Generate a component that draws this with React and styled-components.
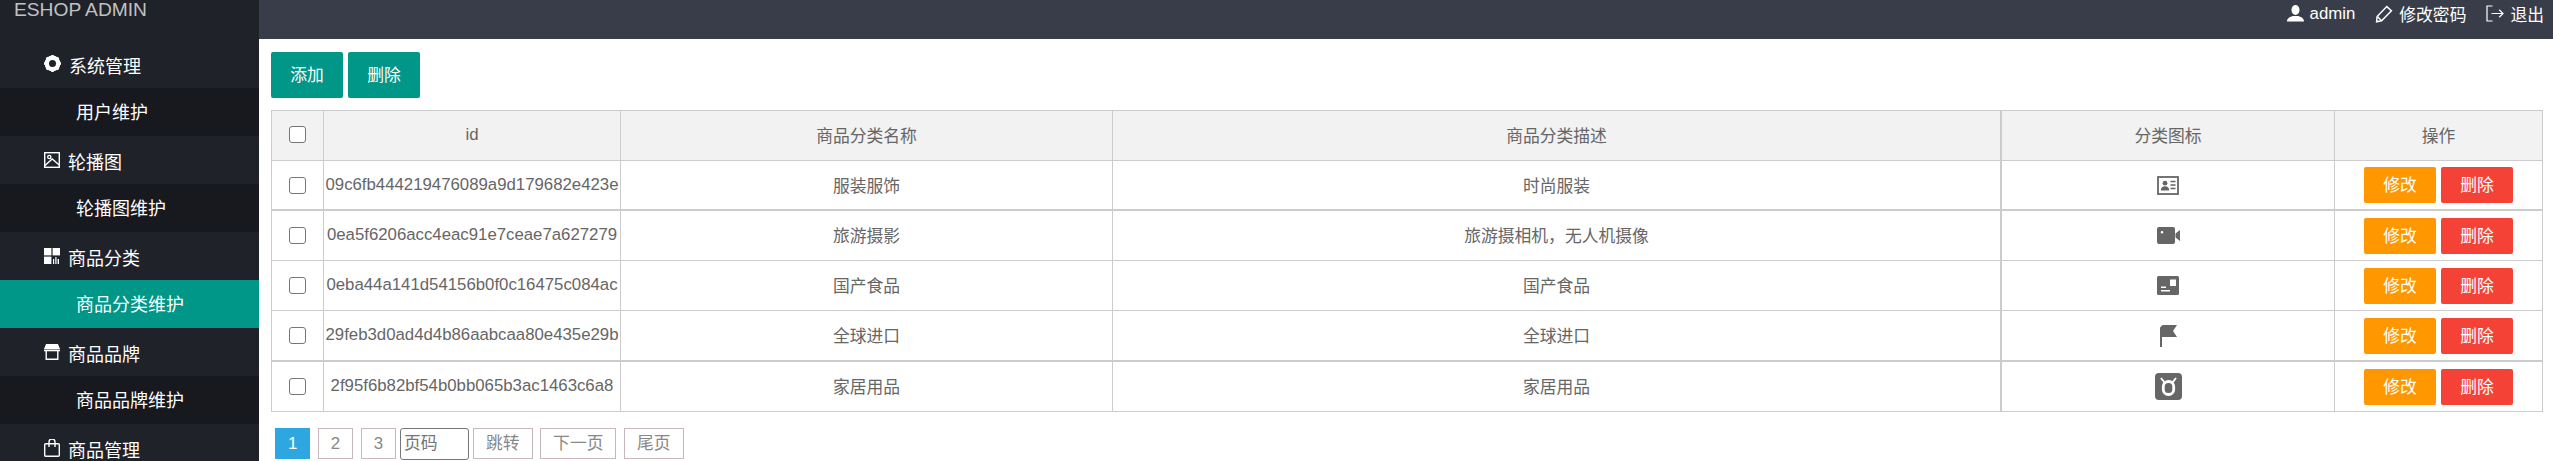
import React from 'react';
import styled, { createGlobalStyle } from 'styled-components';

const GlobalStyle = createGlobalStyle`
    * {
        box-sizing: border-box;
    }

    html, body {
        margin: 0;
        padding: 0;
        height: 100%;
        overflow: hidden;
        background: #fff;
    }

    body {
        font-family: "Liberation Sans", "Noto Sans CJK SC", sans-serif;
        font-size: 16.8px;
        color: #666;
    }
`;

const Page = styled.div`
    display: flex;
    height: 461px;
    overflow: hidden;
`;

const Sidebar = styled.aside`
    flex: 0 0 259px;
    background: #20222a;
    overflow: hidden;
`;

const Brand = styled.div`
    height: 39px;
    padding-left: 14px;
    font-size: 19.2px;
    line-height: 20px;
    color: #c2c2c2;
    white-space: nowrap;
`;

const MenuGroup = styled.div`
    display: flex;
    align-items: center;
    gap: 8px;
    height: ${(props) => (props.$first ? '49px' : '48px')};
    padding-top: 2px;
    padding-left: 44px;
    font-size: 18px;
    color: #fff;
    background: #20222a;

    svg {
        flex: none;
        margin-top: -2px;
    }
`;

const MenuItem = styled.div`
    display: flex;
    align-items: center;
    height: 48px;
    padding: 0 0 2px 76px;
    font-size: 18px;
    color: #fff;
    background: ${(props) => (props.$active ? '#009688' : '#18191f')};
`;

const Main = styled.main`
    flex: 1;
    min-width: 0;
    display: flex;
    flex-direction: column;
`;

const TopBar = styled.header`
    flex: 0 0 39px;
    display: flex;
    justify-content: flex-end;
    gap: 20px;
    padding-right: 9px;
    background: #393d49;
    color: #fff;
`;

const TopLink = styled.div`
    display: flex;
    align-items: center;
    gap: 6px;
    height: 27px;
    white-space: nowrap;
`;

const Content = styled.div`
    padding: 13px 11px 0 12px;
`;

const Toolbar = styled.div`
    display: flex;
    gap: 5px;
    margin-bottom: 12px;
`;

const Button = styled.button`
    width: 72px;
    height: ${(props) => (props.$large ? '46px' : '36px')};
    padding: 0 0 2px;
    border: none;
    border-radius: 2px;
    background: ${(props) => props.$color};
    color: #fff;
    font-family: inherit;
    font-size: 16.8px;
`;

const Table = styled.table`
    width: 2271px;
    table-layout: fixed;
    border-collapse: separate;
    border-spacing: 0;
    border-top: 1px solid #ccc;
    border-right: 1px solid #ccc;
`;

const HeadCell = styled.th`
    height: 50px;
    padding: 0 0 2px;
    font-weight: 400;
    background: #f2f2f2;
    border-left: ${(props) => (props.$thick ? '2px' : '1px')} solid #ccc;
    border-bottom: 1px solid #ccc;
`;

const Cell = styled.td`
    height: ${(props) => props.$height}px;
    padding: 0 0 ${(props) => (props.$flush ? '0' : '1px')};
    text-align: center;
    white-space: nowrap;
    border-left: ${(props) => (props.$thick ? '2px' : '1px')} solid #ccc;
    border-bottom: ${(props) => (props.$heavy ? '2px' : '1px')} solid #ccc;
`;

const CellInner = styled.div`
    display: flex;
    align-items: center;
    justify-content: center;
    gap: 5px;
`;

const Check = styled.input.attrs({ type: 'checkbox' })`
    appearance: none;
    display: block;
    width: 17px;
    height: 17px;
    margin: 0 auto;
    background: #fff;
    border: 1.5px solid #767676;
    border-radius: 3px;
`;

const Pager = styled.nav`
    display: flex;
    align-items: flex-start;
    gap: 7.5px;
    margin-top: 16px;
    padding-left: 4px;
`;

const PageLink = styled.a`
    height: 31px;
    padding: 0 12px;
    line-height: 29px;
    color: ${(props) => (props.$current ? '#fff' : '#888')};
    background: ${(props) => (props.$current ? '#2ea7e0' : '#fff')};
    border: 1px solid ${(props) => (props.$current ? '#2ea7e0' : '#c8b8bc')};
    white-space: nowrap;
`;

const PageInput = styled.input`
    width: 69px;
    height: 32px;
    margin: 0 -3.5px;
    padding: 0 3px;
    border: 1.5px solid #767676;
    border-radius: 3px;
    font-family: inherit;
    font-size: 16.8px;

    &::placeholder {
        color: #757575;
    }
`;

const GearIcon = () => (
    <svg width="17" height="17" viewBox="0 0 17 17">
        <circle cx="8.5" cy="8.5" r="5.7" fill="none" stroke="#fff" strokeWidth="4.4" />
        <g stroke="#fff" strokeWidth="2.4">
            <path d="M8.5 0v3M8.5 14v3M0 8.5h3M14 8.5h3M2.5 2.5l2 2M12.5 12.5l2 2M14.5 2.5l-2 2M4.5 12.5l-2 2" />
        </g>
    </svg>
);

const ImageIcon = () => (
    <svg width="16" height="16" viewBox="0 0 16 16" fill="none" stroke="#fff" strokeWidth="1.4">
        <rect x="0.7" y="0.7" width="14.6" height="14.6" />
        <circle cx="5.3" cy="5" r="1.6" />
        <path d="M1 13.6l7.2-6.6 7 6" />
    </svg>
);

const CategoryIcon = () => (
    <svg width="16" height="17" viewBox="0 0 16 17" fill="#fff">
        <rect x="0" y="0" width="7.4" height="7.4" />
        <rect x="8.6" y="0" width="7.4" height="7.4" />
        <rect x="0" y="8.6" width="7.4" height="7.4" />
        <path d="M9 11h1.2v5H9zM11.3 9h1.2v7h-1.2zM13.6 11H15v5h-1.4z" />
    </svg>
);

const StoreIcon = () => (
    <svg width="16" height="16" viewBox="0 0 16 16" fill="#fff">
        <path d="M2 0h12l2 5H0z" />
        <path d="M0 5.500h16v1.800H0z" />
        <path d="M1.500 7h1.400v7.400h10.200V7h1.400v9H1.500z" />
    </svg>
);

const BagIcon = () => (
    <svg width="16" height="18" viewBox="0 0 16 18" fill="none" stroke="#fff" strokeWidth="1.4">
        <rect x="0.7" y="4.700" width="14.6" height="12.6" rx="1" />
        <path d="M5 8V3a3 3 0 0 1 6 0v5" />
    </svg>
);

const UserIcon = () => (
    <svg width="17" height="17" viewBox="0 0 17 17" fill="#fff">
        <ellipse cx="8.5" cy="5" rx="4" ry="5" />
        <path d="M0 16.500c0-3.600 3.200-4.600 5.600-5.600h5.800c2.400 1 5.600 2 5.600 5.600z" />
    </svg>
);

const PencilIcon = () => (
    <svg width="18" height="18" viewBox="0 0 18 18" fill="none" stroke="#fff" strokeWidth="1.5">
        <path d="M11.800 1.600l4.600 4.200-9.800 10-5 1 .5-5.200z" />
        <path d="M2.600 11.800l4 4" />
    </svg>
);

const LogoutIcon = () => (
    <svg width="18" height="18" viewBox="0 0 18 18" fill="none" stroke="#fff" strokeWidth="1.2">
        <path d="M6.500 1H1v15h5.500" />
        <path d="M5.500 8.500H17M13.200 4.800l3.800 3.700-3.800 3.700" />
    </svg>
);

const CardIcon = () => (
    <svg width="22" height="19" viewBox="0 0 22 19">
        <rect x="1" y="1" width="20" height="17" fill="none" stroke="#666" strokeWidth="1.8" />
        <circle cx="8" cy="7.200" r="2.400" fill="#666" />
        <path d="M3.800 14.500c0-3 2-4.200 4.200-4.200s4.200 1.200 4.200 4.200z" fill="#666" />
        <path d="M13.500 5.500h5M13.500 9h5M13.500 12.500h5" stroke="#666" strokeWidth="1.5" />
    </svg>
);

const VideoIcon = () => (
    <svg width="23" height="17" viewBox="0 0 23 17" fill="#666">
        <path fillRule="evenodd" d="M2 0h14a2 2 0 0 1 2 2v13a2 2 0 0 1-2 2H2a2 2 0 0 1-2-2V2a2 2 0 0 1 2-2zM5 4a1.300 1.300 0 1 0 0 2.600A1.300 1.300 0 0 0 5 4z" />
        <path d="M18.500 6.500L23 3v11l-4.500-3.500z" />
    </svg>
);

const PostcardIcon = () => (
    <svg width="22" height="19" viewBox="0 0 22 19" fill="#666">
        <path fillRule="evenodd" d="M1.500 0h19A1.500 1.500 0 0 1 22 1.500v16a1.500 1.500 0 0 1-1.500 1.500h-19A1.500 1.500 0 0 1 0 17.500v-16A1.500 1.500 0 0 1 1.500 0zM13 3.500V10h6V3.500zM4 10.500V12h5v-1.500zM4 14v1.500h9V14z" />
    </svg>
);

const FlagIcon = () => (
    <svg width="17" height="22" viewBox="0 0 17 22" fill="#666">
        <path d="M0 2.500L2.500 0H17l-4 6 4 6H2v10H0z" />
    </svg>
);

const BullIcon = () => (
    <svg width="27" height="27" viewBox="0 0 27 27">
        <rect width="27" height="27" rx="4" fill="#666" />
        <rect x="8.300" y="8.500" width="10.400" height="13" rx="5" fill="none" stroke="#fff" strokeWidth="2.800" />
        <path d="M6 5l3.500 4.500M21 5l-3.500 4.500" stroke="#fff" strokeWidth="2" fill="none" />
    </svg>
);

const menu = [
    { icon: <GearIcon />, title: '系统管理', child: '用户维护', first: true },
    { icon: <ImageIcon />, title: '轮播图', child: '轮播图维护' },
    { icon: <CategoryIcon />, title: '商品分类', child: '商品分类维护', active: true },
    { icon: <StoreIcon />, title: '商品品牌', child: '商品品牌维护' },
    { icon: <BagIcon />, title: '商品管理' }
];

const rows = [
    { id: '09c6fb444219476089a9d179682e423e', name: '服装服饰', desc: '时尚服装', icon: <CardIcon />, height: 50, heavy: true },
    { id: '0ea5f6206acc4eac91e7ceae7a627279', name: '旅游摄影', desc: '旅游摄相机，无人机摄像', icon: <VideoIcon />, height: 50 },
    { id: '0eba44a141d54156b0f0c16475c084ac', name: '国产食品', desc: '国产食品', icon: <PostcardIcon />, height: 50 },
    { id: '29feb3d0ad4d4b86aabcaa80e435e29b', name: '全球进口', desc: '全球进口', icon: <FlagIcon />, height: 51, heavy: true },
    { id: '2f95f6b82bf54b0bb065b3ac1463c6a8', name: '家居用品', desc: '家居用品', icon: <BullIcon />, height: 50 }
];

function App() {
    return (
        <Page>
            <GlobalStyle />
            <Sidebar>
                <Brand>ESHOP ADMIN</Brand>
                {menu.map((group) => (
                    <React.Fragment key={group.title}>
                        <MenuGroup $first={group.first}>
                            {group.icon}
                            <span>{group.title}</span>
                        </MenuGroup>
                        {group.child && <MenuItem $active={group.active}>{group.child}</MenuItem>}
                    </React.Fragment>
                ))}
            </Sidebar>
            <Main>
                <TopBar>
                    <TopLink><UserIcon /><span>admin</span></TopLink>
                    <TopLink><PencilIcon /><span>修改密码</span></TopLink>
                    <TopLink><LogoutIcon /><span>退出</span></TopLink>
                </TopBar>
                <Content>
                    <Toolbar>
                        <Button $large $color="#009688">添加</Button>
                        <Button $large $color="#009688">删除</Button>
                    </Toolbar>
                    <Table>
                        <colgroup>
                            <col width="52" />
                            <col width="297" />
                            <col width="492" />
                            <col width="888" />
                            <col width="334" />
                            <col width="208" />
                        </colgroup>
                        <thead>
                            <tr>
                                <HeadCell><Check /></HeadCell>
                                <HeadCell>id</HeadCell>
                                <HeadCell>商品分类名称</HeadCell>
                                <HeadCell>商品分类描述</HeadCell>
                                <HeadCell $thick>分类图标</HeadCell>
                                <HeadCell>操作</HeadCell>
                            </tr>
                        </thead>
                        <tbody>
                            {rows.map((row) => (
                                <tr key={row.id}>
                                    <Cell $height={row.height} $heavy={row.heavy} $flush><Check /></Cell>
                                    <Cell $height={row.height} $heavy={row.heavy}>{row.id}</Cell>
                                    <Cell $height={row.height} $heavy={row.heavy}>{row.name}</Cell>
                                    <Cell $height={row.height} $heavy={row.heavy}>{row.desc}</Cell>
                                    <Cell $height={row.height} $heavy={row.heavy} $thick $flush>
                                        <CellInner>{row.icon}</CellInner>
                                    </Cell>
                                    <Cell $height={row.height} $heavy={row.heavy} $flush>
                                        <CellInner>
                                            <Button $color="#ff9800">修改</Button>
                                            <Button $color="#f44336">删除</Button>
                                        </CellInner>
                                    </Cell>
                                </tr>
                            ))}
                        </tbody>
                    </Table>
                    <Pager>
                        <PageLink $current>1</PageLink>
                        <PageLink>2</PageLink>
                        <PageLink>3</PageLink>
                        <PageInput placeholder="页码" />
                        <PageLink>跳转</PageLink>
                        <PageLink>下一页</PageLink>
                        <PageLink>尾页</PageLink>
                    </Pager>
                </Content>
            </Main>
        </Page>
    );
}

export default App;
